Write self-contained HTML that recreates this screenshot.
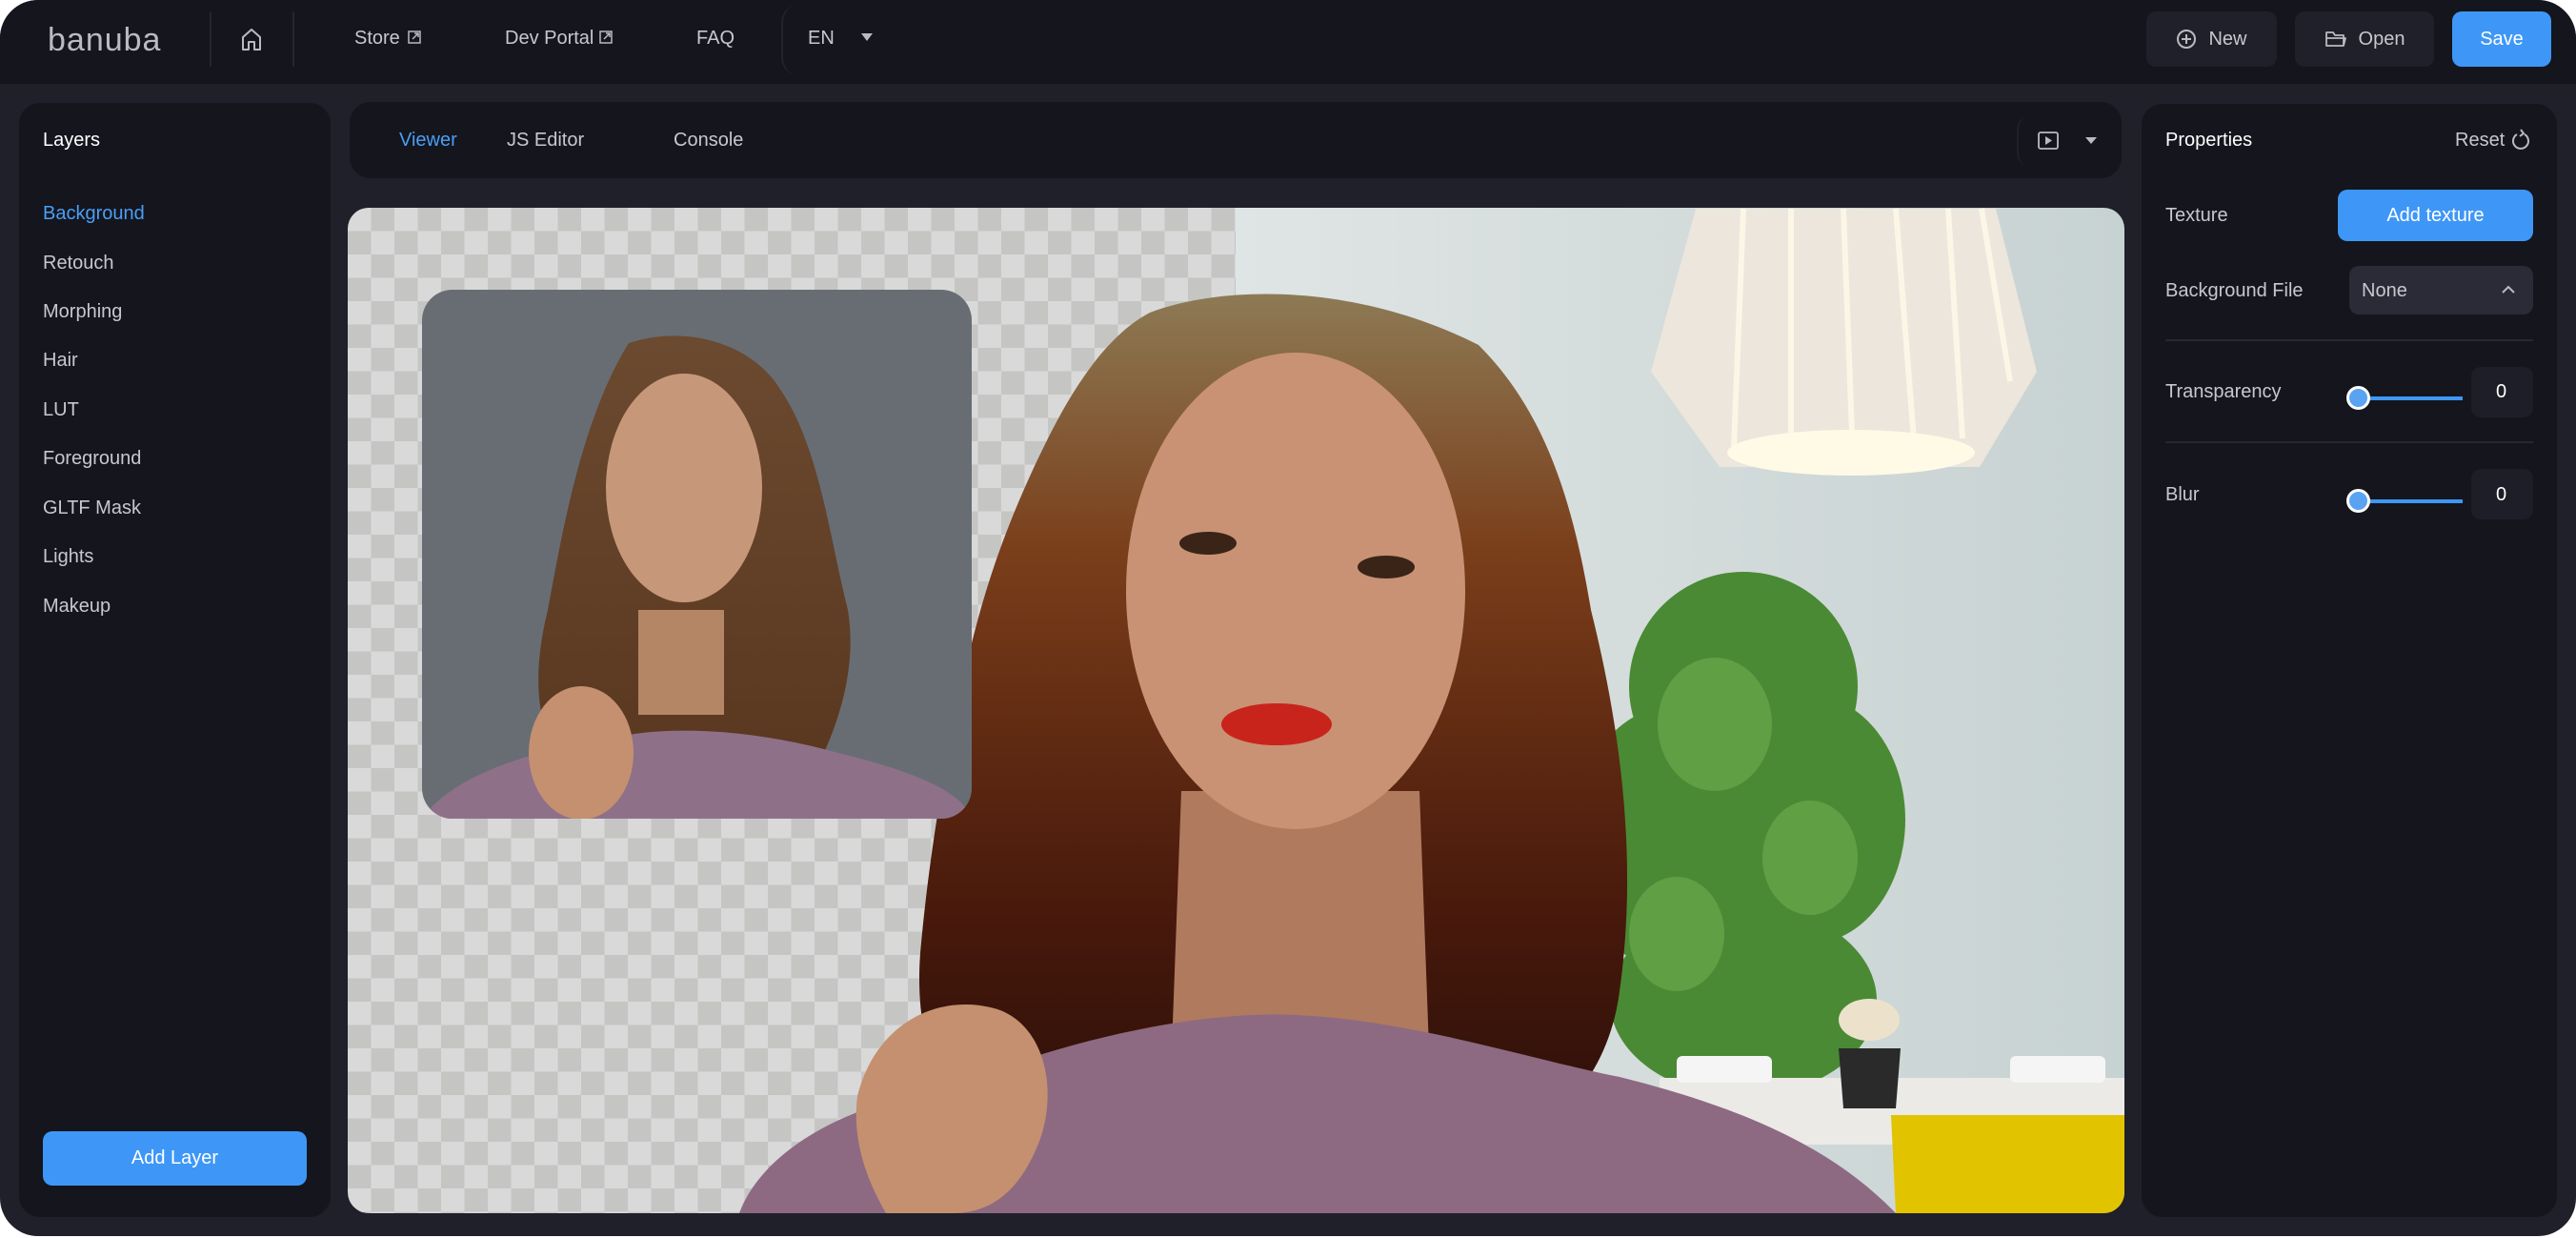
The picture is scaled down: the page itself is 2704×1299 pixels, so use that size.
<!DOCTYPE html>
<html><head><meta charset="utf-8"><style>
*{box-sizing:border-box;margin:0;padding:0}
body{width:2704px;height:1299px;background:#fff;font-family:"Liberation Sans",sans-serif;overflow:hidden;position:relative}
.win{position:absolute;left:0;top:0;width:2704px;height:1297px;background:#1f2029;border-radius:40px;overflow:hidden}
.top{position:absolute;left:0;top:0;width:2704px;height:88px;background:#14151d}
.abs{position:absolute}
.t{position:absolute;color:#c7c8cf;font-size:20px;line-height:24px;white-space:nowrap}
.panel{position:absolute;background:#14151d;border-radius:22px}
.btn{position:absolute;border-radius:10px;color:#c7c8cf;font-size:20px;display:flex;align-items:center;justify-content:center}
.vsep{position:absolute;width:2px;background:#24252f}
.li{position:absolute;left:45px;color:#c7c8cf;font-size:20px;line-height:24px}
</style></head><body>
<div class="win">
<div class="top"></div>
<div class="t" style="left:50px;top:22px;font-size:34px;line-height:40px;color:#b9bac2;letter-spacing:1px">banuba</div>
<div class="vsep" style="left:220px;top:12px;height:58px"></div>
<div class="vsep" style="left:307px;top:12px;height:58px"></div>
<svg class="abs" style="left:252px;top:28px" width="24" height="26" viewBox="0 0 24 26"><path d="M3 11 L12 3 L21 11 V24 H15 V16 H9 V24 H3 Z" fill="none" stroke="#b9bac2" stroke-width="2" stroke-linejoin="round"/></svg>
<div class="t" style="left:372px;top:28px">Store</div>
<svg class="abs" style="left:428px;top:32px" width="14" height="14"><rect x="1" y="1" width="12" height="12" fill="none" stroke="#b9bac2" stroke-width="1.5"/><path d="M5 9 L11 3 M7 3 H11 V7" stroke="#b9bac2" stroke-width="1.5" fill="none"/></svg>
<div class="t" style="left:530px;top:28px">Dev Portal</div>
<svg class="abs" style="left:629px;top:32px" width="14" height="14"><rect x="1" y="1" width="12" height="12" fill="none" stroke="#b9bac2" stroke-width="1.5"/><path d="M5 9 L11 3 M7 3 H11 V7" stroke="#b9bac2" stroke-width="1.5" fill="none"/></svg>
<div class="t" style="left:731px;top:28px">FAQ</div>
<div class="abs" style="left:820px;top:4px;width:20px;height:76px;border-left:2px solid #22232c;border-radius:20px 0 0 20px"></div>
<div class="t" style="left:848px;top:28px">EN</div>
<svg class="abs" style="left:903px;top:34px" width="14" height="10"><path d="M1 1 H13 L7 9 Z" fill="#b9bac2"/></svg>

<div class="btn" style="left:2253px;top:12px;width:137px;height:58px;background:#1f2029"><svg width="22" height="22" style="margin-right:12px"><circle cx="11" cy="11" r="9" fill="none" stroke="#b9bac2" stroke-width="2"/><path d="M11 6V16M6 11H16" stroke="#b9bac2" stroke-width="2"/></svg>New</div>
<div class="btn" style="left:2409px;top:12px;width:146px;height:58px;background:#1f2029"><svg width="24" height="20" style="margin-right:12px"><path d="M2 3 H9 L11 6 H20 V17 H2 Z M2 9 H22 L20 17" fill="none" stroke="#b9bac2" stroke-width="1.8" stroke-linejoin="round"/></svg>Open</div>
<div class="btn" style="left:2574px;top:12px;width:104px;height:58px;background:#3e97f6;color:#fff">Save</div>

<!-- left panel -->
<div class="panel" style="left:20px;top:108px;width:327px;height:1169px"></div>
<div class="li" style="top:135px;color:#fff">Layers</div>
<div class="li" style="top:212px;color:#4a9ff5">Background</div>
<div class="li" style="top:264px">Retouch</div>
<div class="li" style="top:315px">Morphing</div>
<div class="li" style="top:366px">Hair</div>
<div class="li" style="top:418px">LUT</div>
<div class="li" style="top:469px">Foreground</div>
<div class="li" style="top:521px">GLTF Mask</div>
<div class="li" style="top:572px">Lights</div>
<div class="li" style="top:624px">Makeup</div>
<div class="btn" style="left:45px;top:1187px;width:277px;height:57px;background:#3e97f6;color:#fff">Add Layer</div>

<!-- tab bar -->
<div class="panel" style="left:367px;top:107px;width:1860px;height:80px"></div>
<div class="t" style="left:419px;top:135px;color:#4a9ff5">Viewer</div>
<div class="t" style="left:532px;top:135px">JS Editor</div>
<div class="t" style="left:707px;top:135px">Console</div>
<div class="abs" style="left:2117px;top:120px;width:20px;height:56px;border-left:2px solid #1f2029;border-radius:16px 0 0 16px"></div>
<svg class="abs" style="left:2139px;top:138px" width="22" height="20"><rect x="1" y="1" width="20" height="17" rx="2" fill="none" stroke="#b9bac2" stroke-width="1.8"/><path d="M8 5 L15 9.5 L8 14 Z" fill="#b9bac2"/></svg>
<svg class="abs" style="left:2188px;top:143px" width="14" height="10"><path d="M1 1 H13 L7 8 Z" fill="#b9bac2"/></svg>

<!-- canvas -->
<svg class="abs" style="left:365px;top:218px" width="1865" height="1055" viewBox="365 218 1865 1055">
<defs>
<clipPath id="c"><rect x="365" y="218" width="1865" height="1055" rx="22"/></clipPath>
<pattern id="ck" x="365" y="218" width="49" height="49" patternUnits="userSpaceOnUse"><rect width="49" height="49" fill="#c5c6c4"/><rect width="24.5" height="24.5" fill="#d9d9d9"/><rect x="24.5" y="24.5" width="24.5" height="24.5" fill="#d9d9d9"/></pattern>
<linearGradient id="wall" x1="0" x2="1"><stop offset="0" stop-color="#dfe5e4"/><stop offset="1" stop-color="#c7d2d2"/></linearGradient>
<linearGradient id="hair" x1="0" y1="0" x2="0" y2="1"><stop offset="0" stop-color="#8d7a55"/><stop offset="0.3" stop-color="#7a3e1a"/><stop offset="0.7" stop-color="#4a1a0c"/><stop offset="1" stop-color="#2a0e08"/></linearGradient>
<linearGradient id="ihair" x1="0" y1="0" x2="0" y2="1"><stop offset="0" stop-color="#6b4a30"/><stop offset="1" stop-color="#5a3820"/></linearGradient>
<clipPath id="ic"><rect x="443" y="304" width="577" height="555" rx="32"/></clipPath>
</defs>
<g clip-path="url(#c)">
<rect x="365" y="218" width="932" height="1055" fill="url(#ck)"/>
<rect x="1297" y="218" width="933" height="1055" fill="url(#wall)"/>
<!-- lamp -->
<path d="M1780 219 L2095 219 L2138 390 L2078 490 L1805 490 L1733 390 Z" fill="#ece6dc"/>
<g stroke="#fdf6e6" stroke-width="6"><path d="M1830 219 L1820 470M1880 219 L1880 480M1935 219 L1945 480M1990 219 L2010 475M2045 219 L2060 460M2080 219 L2110 400"/></g>
<ellipse cx="1943" cy="475" rx="130" ry="24" fill="#fffae6"/>
<!-- plant -->
<g fill="#4a8a34"><ellipse cx="1830" cy="720" rx="120" ry="120"/><ellipse cx="1760" cy="880" rx="110" ry="140"/><ellipse cx="1900" cy="860" rx="100" ry="130"/><ellipse cx="1830" cy="1050" rx="140" ry="100"/></g>
<g fill="#6aa84a" opacity=".7"><ellipse cx="1800" cy="760" rx="60" ry="70"/><ellipse cx="1900" cy="900" rx="50" ry="60"/><ellipse cx="1760" cy="980" rx="50" ry="60"/></g>
<rect x="1742" y="1131" width="488" height="70" fill="#ebeae6"/>
<rect x="1760" y="1108" width="100" height="28" rx="6" fill="#f5f5f5"/>
<rect x="2110" y="1108" width="100" height="28" rx="6" fill="#f5f5f5"/>
<path d="M1930 1100 H1995 L1990 1163 H1935 Z" fill="#2a2a2a"/>
<ellipse cx="1962" cy="1070" rx="32" ry="22" fill="#ece2cc"/>
<path d="M1985 1170 H2230 V1273 H1990 Z" fill="#e2c300"/>
<!-- main woman -->
<path d="M1207 328 C1280 300 1420 295 1552 362 C1620 430 1650 520 1670 640 C1700 760 1720 900 1700 1040 C1690 1120 1640 1190 1552 1210 L1035 1210 C980 1150 960 1080 966 1000 C975 900 990 810 1010 720 C1030 620 1060 540 1100 460 C1130 400 1165 350 1207 328 Z" fill="url(#hair)"/>
<path d="M1240 830 H1490 L1500 1100 H1230 Z" fill="#b07a5e"/>
<ellipse cx="1360" cy="620" rx="178" ry="250" fill="#c99274"/>
<ellipse cx="1340" cy="760" rx="58" ry="22" fill="#c8241c"/>
<ellipse cx="1268" cy="570" rx="30" ry="12" fill="#3a2418"/>
<ellipse cx="1455" cy="595" rx="30" ry="12" fill="#3a2418"/>
<path d="M776 1273 C800 1210 880 1160 1000 1140 C1120 1090 1260 1060 1360 1065 C1480 1070 1600 1110 1700 1130 C1820 1160 1920 1200 1990 1273 Z" fill="#8d6a82"/>
<path d="M900 1150 C920 1070 990 1040 1050 1060 C1100 1080 1110 1150 1090 1200 C1070 1250 1040 1273 1000 1273 L930 1273 C905 1230 895 1190 900 1150 Z" fill="#c49070"/>
<!-- inset -->
<g clip-path="url(#ic)">
<rect x="443" y="304" width="577" height="555" fill="#686d74"/>
<path d="M660 360 C720 340 790 360 820 410 C860 470 870 560 890 640 C900 700 880 760 860 800 L590 800 C560 760 560 700 575 640 C590 560 610 440 660 360 Z" fill="url(#ihair)"/>
<rect x="670" y="640" width="90" height="110" fill="#b58666"/>
<ellipse cx="718" cy="512" rx="82" ry="120" fill="#c7977a"/>
<path d="M443 859 C470 820 540 790 640 775 C700 760 790 765 880 790 C960 810 1010 830 1020 859 Z" fill="#8f7089"/>
<ellipse cx="610" cy="790" rx="55" ry="70" fill="#c49070"/>
</g>
</g>
</svg>

<!-- right panel -->
<div class="panel" style="left:2248px;top:109px;width:436px;height:1168px"></div>
<div class="t" style="left:2273px;top:135px;color:#fff">Properties</div>
<div class="t" style="left:2577px;top:135px">Reset</div>
<svg class="abs" style="left:2636px;top:135px" width="20" height="24"><path d="M6 6 A8 8 0 1 0 14 6" fill="none" stroke="#b9bac2" stroke-width="2"/><path d="M10 1 L13 5 L9 8" fill="none" stroke="#b9bac2" stroke-width="2"/></svg>
<div class="t" style="left:2273px;top:214px">Texture</div>
<div class="btn" style="left:2454px;top:199px;width:205px;height:54px;background:#3e97f6;color:#fff">Add texture</div>
<div class="t" style="left:2273px;top:293px">Background File</div>
<div class="abs" style="left:2466px;top:279px;width:193px;height:51px;background:#2a2b36;border-radius:10px"></div>
<div class="t" style="left:2479px;top:293px">None</div>
<svg class="abs" style="left:2625px;top:298px" width="16" height="12"><path d="M2 9 L8 3 L14 9" fill="none" stroke="#b9bac2" stroke-width="2"/></svg>
<div class="abs" style="left:2273px;top:356px;width:386px;height:2px;background:#262732"></div>
<div class="t" style="left:2273px;top:399px">Transparency</div>
<div class="abs" style="left:2475px;top:416px;width:110px;height:4px;background:#3e97f6"></div>
<div class="abs" style="left:2463px;top:405px;width:25px;height:25px;border-radius:50%;background:#5aa3f2;border:3px solid #fff"></div>
<div class="abs" style="left:2594px;top:385px;width:65px;height:53px;background:#1d1e27;border-radius:10px"></div>
<div class="t" style="left:2620px;top:399px;color:#fff">0</div>
<div class="abs" style="left:2273px;top:463px;width:386px;height:2px;background:#262732"></div>
<div class="t" style="left:2273px;top:507px">Blur</div>
<div class="abs" style="left:2475px;top:524px;width:110px;height:4px;background:#3e97f6"></div>
<div class="abs" style="left:2463px;top:513px;width:25px;height:25px;border-radius:50%;background:#5aa3f2;border:3px solid #fff"></div>
<div class="abs" style="left:2594px;top:492px;width:65px;height:53px;background:#1d1e27;border-radius:10px"></div>
<div class="t" style="left:2620px;top:507px;color:#fff">0</div>
</div>
</body></html>
